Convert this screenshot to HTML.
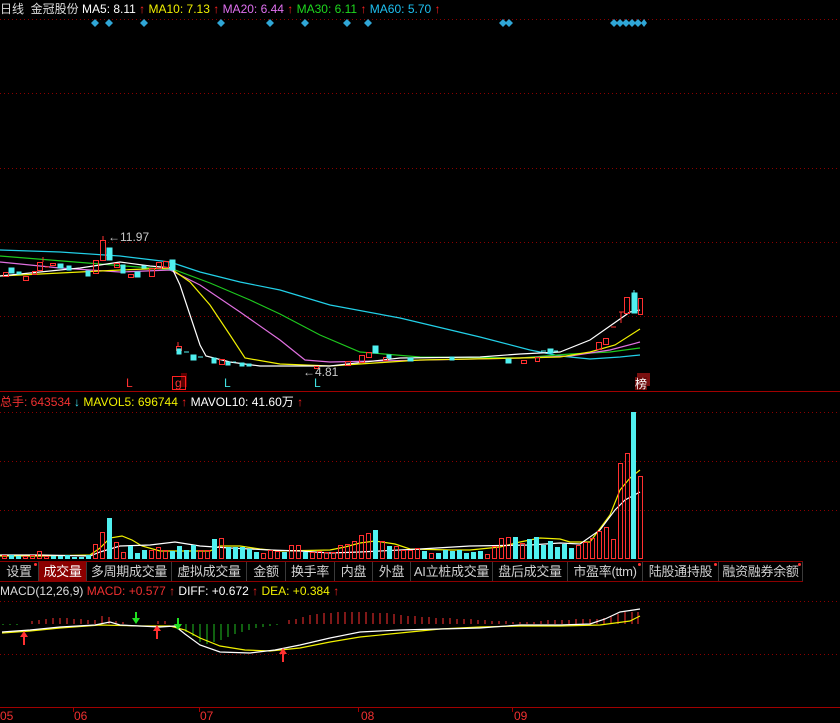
<!DOCTYPE html>
<html><head><meta charset="utf-8"><style>
html,body{margin:0;padding:0;background:#000;width:840px;height:723px;overflow:hidden}
body{font-family:"Liberation Sans","Noto Sans CJK SC",sans-serif;position:relative}
.t{position:absolute;font-size:12px;white-space:nowrap;line-height:14px}
.tabs{position:absolute;left:0;top:561px;height:19px;display:flex;border-top:1px solid #8b0000;border-bottom:1px solid #8b0000;}
.tabs div{color:#d0d0d0;font-size:13px;line-height:19px;text-align:center;box-sizing:border-box;border-right:1px solid #3a3a3a;position:relative;white-space:nowrap;overflow:hidden;letter-spacing:-0.3px;font-family:"Liberation Sans","Noto Sans CJK SC",sans-serif}
.tabs div.a{background:#8b0000;color:#fff}
.tabs div i{position:absolute;right:1px;top:1px;width:3px;height:3px;background:#f33;border-radius:2px}
</style></head><body>
<svg width="840" height="723" style="position:absolute;left:0;top:0" xmlns="http://www.w3.org/2000/svg">
<g stroke="#8b0000" stroke-dasharray="1,3" stroke-width="1">
<line x1="0" y1="19.5" x2="840" y2="19.5"/><line x1="0" y1="93.5" x2="840" y2="93.5"/><line x1="0" y1="168.5" x2="840" y2="168.5"/><line x1="0" y1="242.5" x2="840" y2="242.5"/><line x1="0" y1="316.5" x2="840" y2="316.5"/>
<line x1="0" y1="412.5" x2="840" y2="412.5"/><line x1="0" y1="461.5" x2="840" y2="461.5"/><line x1="0" y1="510.5" x2="840" y2="510.5"/>
<line x1="0" y1="601.5" x2="840" y2="601.5"/><line x1="0" y1="654.5" x2="840" y2="654.5"/>
</g>
<g stroke="#a00000" stroke-width="1"><line x1="0" y1="391.5" x2="840" y2="391.5"/><line x1="0" y1="707.5" x2="840" y2="707.5"/>
<line x1="73.5" y1="707" x2="73.5" y2="712"/><line x1="199.5" y1="707" x2="199.5" y2="712"/><line x1="358.5" y1="707" x2="358.5" y2="712"/><line x1="512.5" y1="707" x2="512.5" y2="712"/></g>
<g fill="#2fa6d6">
<path d="M95 19l4 4-4 4-4-4z"/><path d="M109 19l4 4-4 4-4-4z"/><path d="M144 19l4 4-4 4-4-4z"/><path d="M221 19l4 4-4 4-4-4z"/><path d="M270 19l4 4-4 4-4-4z"/><path d="M305 19l4 4-4 4-4-4z"/><path d="M347 19l4 4-4 4-4-4z"/><path d="M368 19l4 4-4 4-4-4z"/><path d="M503 19l4 4-4 4-4-4z"/><path d="M509 19l4 4-4 4-4-4z"/><path d="M614 19l4 4-4 4-4-4z"/><path d="M620 19l4 4-4 4-4-4z"/><path d="M626 19l4 4-4 4-4-4z"/><path d="M632 19l4 4-4 4-4-4z"/><path d="M638 19l4 4-4 4-4-4z"/><path d="M644 19l3 4-3 4-3-4z"/></g>
<g fill="none" stroke-width="1.2">
<polyline stroke="#22d0e8" points="0,250 60,252 120,256 170,262 200,272 240,282 280,290 330,305 400,318 480,337 530,350 560,356 590,359 620,357 640,355"/>
<polyline stroke="#1ec81e" points="0,256 50,260 100,264 150,268 175,270 210,283 250,300 280,314 320,335 360,352 420,357 520,358 570,354 610,352 640,348"/>
<polyline stroke="#e070e0" points="0,262 60,268 120,272 170,270 200,285 240,312 280,340 305,360 330,362 520,358 570,356 610,350 640,342"/>
<polyline stroke="#f0f000" points="0,276 60,273 120,270 170,268 190,282 210,305 230,335 245,358 280,364 330,366 420,360 520,358 560,357 590,352 615,345 640,329"/>
<polyline stroke="#ffffff" points="0,276 40,272 80,268 120,262 150,266 172,268 180,285 190,315 200,345 206,356 230,362 260,366 330,366 400,358 480,357 520,354 560,352 590,340 610,326 630,312 640,310"/>
</g>
<g stroke="#ff3030" fill="none" stroke-width="1">
<rect x="3.5" y="272.5" width="5" height="4"/><rect x="23.5" y="276.5" width="5" height="4"/><rect x="32.5" y="271.5" width="4" height="3"/><rect x="37.5" y="262.5" width="5" height="8"/><rect x="50.5" y="263.5" width="5" height="2"/><rect x="93.5" y="260.5" width="5" height="13"/><rect x="100.5" y="240.5" width="5" height="20"/><rect x="114.5" y="263.5" width="5" height="4"/><rect x="128.5" y="274.5" width="5" height="3"/><rect x="149.5" y="268.5" width="5" height="8"/><rect x="156.5" y="262.5" width="5" height="6"/><rect x="163.5" y="261.5" width="5" height="6"/><rect x="176.5" y="346.5" width="5" height="4"/><rect x="219.5" y="359.5" width="5" height="5"/><rect x="314.5" y="366.5" width="4" height="2"/><rect x="345.5" y="361.5" width="5" height="4"/><rect x="359.5" y="355.5" width="5" height="7"/><rect x="366.5" y="352.5" width="5" height="5"/><rect x="383.5" y="357.5" width="4" height="3"/><rect x="521.5" y="360.5" width="5" height="3"/><rect x="535.5" y="357.5" width="4" height="4"/><rect x="596.5" y="342.5" width="5" height="7"/><rect x="603.5" y="338.5" width="5" height="6"/><rect x="624.5" y="297.5" width="5" height="16"/><rect x="638.5" y="298.5" width="4" height="16"/>
<line x1="611" y1="327" x2="616" y2="327"/><line x1="619" y1="312" x2="624" y2="312"/><line x1="621" y1="312" x2="621" y2="323"/><line x1="103" y1="236" x2="103" y2="240"/><line x1="43" y1="257" x2="43" y2="262"/><line x1="45" y1="267" x2="49" y2="267"/><line x1="178" y1="342" x2="178" y2="346"/>
</g>
<g fill="#50f0f0" stroke="#50f0f0">
<rect x="9" y="268" width="5" height="5"/><rect x="17" y="272" width="4" height="2"/><rect x="58" y="264" width="5" height="4"/><rect x="67" y="266" width="4" height="4"/><rect x="86" y="271" width="4" height="5"/><rect x="107" y="248" width="5" height="12"/><rect x="121" y="265" width="4" height="8"/><rect x="135" y="272" width="5" height="5"/><rect x="142" y="266" width="4" height="2"/><rect x="170" y="260" width="5" height="10"/>
<rect x="177" y="349" width="4" height="5"/><rect x="191" y="355" width="5" height="5"/><rect x="212" y="358" width="4" height="5"/><rect x="226" y="362" width="4" height="3"/><rect x="240" y="363" width="4" height="3"/><rect x="247" y="364" width="4" height="2"/><rect x="373" y="346" width="5" height="7"/><rect x="387" y="355" width="4" height="3"/><rect x="408" y="358" width="5" height="3"/><rect x="450" y="357" width="4" height="3"/><rect x="506" y="359" width="5" height="4"/><rect x="548" y="349" width="5" height="4"/><rect x="632" y="293" width="5" height="20"/>
<line x1="184" y1="352" x2="189" y2="352"/><line x1="198" y1="357" x2="203" y2="357"/><line x1="233" y1="362" x2="236" y2="362"/><line x1="541" y1="351" x2="546" y2="351"/><line x1="554" y1="351" x2="558" y2="351"/><line x1="634" y1="290" x2="634" y2="293"/>
</g>
<text x="108" y="241" fill="#c8c8c8" font-size="12" font-family="Liberation Sans">←11.97</text>
<text x="303" y="376" fill="#c8c8c8" font-size="12" font-family="Liberation Sans">←4.81</text>
<text x="126" y="387" fill="#ff3030" font-size="12" font-family="Liberation Sans">L</text>
<text x="224" y="387" fill="#40e0e0" font-size="12" font-family="Liberation Sans">L</text>
<text x="314" y="387" fill="#40e0e0" font-size="12" font-family="Liberation Sans">L</text>
<rect x="181" y="373" width="6" height="14" fill="#5a0000"/>
<rect x="172.5" y="376.5" width="13" height="13" fill="none" stroke="#ff2020"/>
<text x="175" y="387" fill="#ff3030" font-size="12" font-family="Liberation Sans">g</text>
<rect x="637" y="373" width="13" height="13" fill="#7a1010"/>
<rect x="635" y="377" width="12" height="13" fill="#6a0a0a"/>
<text x="635" y="388" fill="#fff" font-size="12" font-family="Liberation Sans,Noto Sans CJK SC,sans-serif">榜</text>
<g fill="none" stroke-width="1.2">
<polyline stroke="#f0f000" points="0,556 40,556 90,555 100,548 110,538 122,536 132,540 142,546 160,551 210,551 220,546 240,546 260,549 280,551 330,550 345,547 360,543 375,541 395,544 410,549 450,550 470,550 500,547 520,542 540,538 560,539 570,542 590,542 610,515 620,490 630,478 640,470"/>
<polyline stroke="#ffffff" points="0,555 40,555 90,556 100,552 120,546 150,545 175,542 200,546 230,548 270,550 300,551 330,553 360,552 380,551 420,549 470,546 530,545 560,543 580,544 600,530 615,510 625,500 640,492"/>
</g>
<g stroke="#ff3030" stroke-width="1">
<path d="M32 624v-3M39 624v-4M46 624v-5M53 624v-6M60 624v-6M67 624v-6M74 624v-5M81 624v-5M88 624v-4M95 624v-4M102 624v-8M109 624v-7M116 624v-3M123 624v-2M158 624v-3M165 624v-3M289 624v-4M296 624v-5M303 624v-7M310 624v-9M317 624v-10M324 624v-11M331 624v-11M338 624v-12M345 624v-12M352 624v-12M359 624v-12M366 624v-12M373 624v-11M380 624v-11M387 624v-11M394 624v-10M401 624v-9M408 624v-8M415 624v-8M422 624v-7M429 624v-7M436 624v-6M443 624v-6M450 624v-6M457 624v-5M464 624v-5M471 624v-5M478 624v-4M485 624v-4M492 624v-3M499 624v-3M506 624v-3M513 624v-2M520 624v-2M527 624v-2M534 624v-2M541 624v-3M548 624v-4M555 624v-4M562 624v-4M569 624v-4M576 624v-5M583 624v-5M590 624v-5M597 624v-5M604 624v-6M611 624v-8M618 624v-10M625 624v-12M632 624v-12M638 624v-12"/></g>
<g stroke="#20c020" stroke-width="1">
<path d="M3 624v1M10 624v1M17 624v1M186 624v8M193 624v12M200 624v18M207 624v20M214 624v18M221 624v16M228 624v13M235 624v10M242 624v8M249 624v6M256 624v4M263 624v3M270 624v2M277 624v1"/></g>
<g fill="none" stroke-width="1.2">
<polyline stroke="#f0f000" points="2,633 30,631 60,628 100,625 140,626 170,626 185,630 200,638 220,646 245,650 270,651 300,648 330,642 360,637 400,633 440,629 480,627 520,626 560,626 600,625 615,623 630,621 640,616"/>
<polyline stroke="#ffffff" points="2,632 30,630 60,627 95,625 110,622 120,625 160,627 175,626 185,634 200,645 220,652 250,653 275,650 300,645 330,638 360,632 400,630 440,629 480,628 520,625 560,625 590,624 605,619 620,612 640,609"/>
</g>
<g fill="#ff3030"><path d="M24 631l-4 6h3v8h2v-8h3z"/><path d="M157 625l-4 6h3v8h2v-8h3z"/><path d="M283 648l-4 6h3v8h2v-8h3z"/></g>
<g fill="#20e020"><path d="M136 624l-4-6h3v-6h2v6h3z"/><path d="M178 630l-4-6h3v-6h2v6h3z"/></g>
</svg>
<div class="t" style="left:0;top:2px;color:#ddd">日线&nbsp;&nbsp;金冠股份 <span style="color:#fff">MA5: 8.11 <span style="color:#f22">↑</span></span> <span style="color:#f0f000">MA10: 7.13 <span style="color:#f22">↑</span></span> <span style="color:#e070f0">MA20: 6.44 <span style="color:#f22">↑</span></span> <span style="color:#1ed81e">MA30: 6.11 <span style="color:#f22">↑</span></span> <span style="color:#1ec0f0">MA60: 5.70 <span style="color:#f22">↑</span></span></div>
<div class="t" style="left:0;top:395px;color:#f03030">总手: 643534 <span style="color:#40e0f0">↓</span> <span style="color:#f0f000">MAVOL5: 696744 <span style="color:#f22">↑</span></span> <span style="color:#fff">MAVOL10: 41.60万 <span style="color:#f22">↑</span></span></div>
<div class="tabs"><div style="width:39px">设置<i></i></div><div class="a" style="width:48px">成交量</div><div style="width:85px">多周期成交量</div><div style="width:75px">虚拟成交量</div><div style="width:39px">金额</div><div style="width:49px">换手率</div><div style="width:38px">内盘</div><div style="width:38px">外盘</div><div style="width:82px">AI立桩成交量</div><div style="width:75px">盘后成交量</div><div style="width:75px">市盈率(ttm)<i></i></div><div style="width:76px">陆股通持股<i></i></div><div style="width:84px">融资融券余额<i></i></div></div>
<div class="t" style="left:0;top:584px;color:#ddd">MACD(12,26,9) <span style="color:#f03030">MACD: +0.577 ↑</span> <span style="color:#fff">DIFF: +0.672 <span style="color:#f22">↑</span></span> <span style="color:#f0f000">DEA: +0.384 <span style="color:#f22">↑</span></span></div>
<div class="t" style="left:0;top:709px;color:#f03030">05</div><div class="t" style="left:74px;top:709px;color:#f03030">06</div><div class="t" style="left:200px;top:709px;color:#f03030">07</div><div class="t" style="left:361px;top:709px;color:#f03030">08</div><div class="t" style="left:514px;top:709px;color:#f03030">09</div>
<svg width="840" height="723" style="position:absolute;left:0;top:0;pointer-events:none" xmlns="http://www.w3.org/2000/svg">
<g fill="#50f0f0">
<rect x="9" y="555" width="5" height="4"/><rect x="16" y="556" width="5" height="3"/><rect x="51" y="556" width="5" height="3"/><rect x="58" y="556" width="5" height="3"/><rect x="65" y="555" width="5" height="4"/><rect x="72" y="557" width="5" height="2"/><rect x="79" y="557" width="5" height="2"/><rect x="86" y="555" width="5" height="4"/><rect x="107" y="518" width="5" height="41"/><rect x="128" y="546" width="5" height="13"/><rect x="135" y="553" width="5" height="6"/><rect x="142" y="550" width="5" height="9"/><rect x="170" y="551" width="5" height="8"/><rect x="177" y="546" width="5" height="13"/><rect x="184" y="550" width="5" height="9"/><rect x="191" y="545" width="5" height="14"/><rect x="212" y="539" width="5" height="20"/><rect x="226" y="547" width="5" height="12"/><rect x="233" y="547" width="5" height="12"/><rect x="240" y="547" width="5" height="12"/><rect x="247" y="549" width="5" height="10"/><rect x="254" y="552" width="5" height="7"/><rect x="282" y="552" width="5" height="7"/><rect x="303" y="552" width="5" height="7"/><rect x="373" y="530" width="5" height="29"/><rect x="387" y="546" width="5" height="13"/><rect x="422" y="551" width="5" height="8"/><rect x="436" y="553" width="5" height="6"/><rect x="443" y="550" width="5" height="9"/><rect x="450" y="551" width="5" height="8"/><rect x="457" y="550" width="5" height="9"/><rect x="464" y="553" width="5" height="6"/><rect x="471" y="552" width="5" height="7"/><rect x="478" y="551" width="5" height="8"/><rect x="513" y="537" width="5" height="22"/><rect x="527" y="539" width="5" height="20"/><rect x="534" y="537" width="5" height="22"/><rect x="541" y="545" width="5" height="14"/><rect x="548" y="541" width="5" height="18"/><rect x="555" y="547" width="5" height="12"/><rect x="562" y="544" width="5" height="15"/><rect x="569" y="548" width="5" height="11"/><rect x="631" y="412" width="5" height="147"/></g>
<g fill="none" stroke="#ff3030">
<rect x="2.5" y="555.5" width="4" height="3"/><rect x="23.5" y="556.5" width="4" height="2"/><rect x="30.5" y="555.5" width="4" height="3"/><rect x="37.5" y="551.5" width="4" height="7"/><rect x="44.5" y="556.5" width="4" height="2"/><rect x="93.5" y="544.5" width="4" height="14"/><rect x="100.5" y="532.5" width="4" height="26"/><rect x="114.5" y="542.5" width="4" height="16"/><rect x="121.5" y="552.5" width="4" height="6"/><rect x="149.5" y="550.5" width="4" height="8"/><rect x="156.5" y="547.5" width="4" height="11"/><rect x="163.5" y="550.5" width="4" height="8"/><rect x="198.5" y="550.5" width="4" height="8"/><rect x="205.5" y="550.5" width="4" height="8"/><rect x="219.5" y="538.5" width="4" height="20"/><rect x="261.5" y="553.5" width="4" height="5"/><rect x="268.5" y="550.5" width="4" height="8"/><rect x="275.5" y="551.5" width="4" height="7"/><rect x="289.5" y="545.5" width="4" height="13"/><rect x="296.5" y="545.5" width="4" height="13"/><rect x="310.5" y="552.5" width="4" height="6"/><rect x="317.5" y="551.5" width="4" height="7"/><rect x="324.5" y="552.5" width="4" height="6"/><rect x="331.5" y="552.5" width="4" height="6"/><rect x="338.5" y="545.5" width="4" height="13"/><rect x="345.5" y="544.5" width="4" height="14"/><rect x="352.5" y="541.5" width="4" height="17"/><rect x="359.5" y="535.5" width="4" height="23"/><rect x="366.5" y="533.5" width="4" height="25"/><rect x="380.5" y="541.5" width="4" height="17"/><rect x="394.5" y="546.5" width="4" height="12"/><rect x="401.5" y="550.5" width="4" height="8"/><rect x="408.5" y="550.5" width="4" height="8"/><rect x="415.5" y="548.5" width="4" height="10"/><rect x="429.5" y="553.5" width="4" height="5"/><rect x="485.5" y="554.5" width="4" height="4"/><rect x="492.5" y="546.5" width="4" height="12"/><rect x="499.5" y="538.5" width="4" height="20"/><rect x="506.5" y="537.5" width="4" height="21"/><rect x="520.5" y="543.5" width="4" height="15"/><rect x="576.5" y="545.5" width="4" height="13"/><rect x="583.5" y="542.5" width="4" height="16"/><rect x="590.5" y="538.5" width="4" height="20"/><rect x="597.5" y="531.5" width="4" height="27"/><rect x="604.5" y="527.5" width="4" height="31"/><rect x="611.5" y="539.5" width="4" height="19"/><rect x="618.5" y="463.5" width="4" height="95"/><rect x="625.5" y="453.5" width="4" height="105"/><rect x="638.5" y="476.5" width="4" height="82"/></g>
</svg>
</body></html>
